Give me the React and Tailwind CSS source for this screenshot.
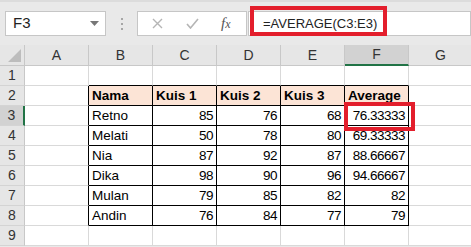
import React from 'react';

const cols = ['A', 'B', 'C', 'D', 'E', 'F', 'G'];

const data = {
  2: ['Nama', 'Kuis 1', 'Kuis 2', 'Kuis 3', 'Average'],
  3: ['Retno', '85', '76', '68', '76.33333'],
  4: ['Melati', '50', '78', '80', '69.33333'],
  5: ['Nia', '87', '92', '87', '88.66667'],
  6: ['Dika', '98', '90', '96', '94.66667'],
  7: ['Mulan', '79', '85', '82', '82'],
  8: ['Andin', '76', '84', '77', '79'],
};

const inTable = (r, c) => r >= 2 && r <= 8 && c >= 1 && c <= 5;

const Cell = ({ r, c }) => {
  const rightBlack = inTable(r, c) || (c === 0 && r >= 2 && r <= 8);
  const bottomBlack = inTable(r, c) || (r === 1 && c >= 1 && c <= 5);
  const row = data[r];
  const text = row && c >= 1 && c <= 5 ? row[c - 1] : '';
  const header = r === 2 && inTable(r, c);
  const numeric = !header && c >= 2;
  return (
    <div
      className={`h-[20px] border-r border-b px-[3px] text-[13.5px] leading-[19px] text-black whitespace-nowrap overflow-hidden ${
        rightBlack ? 'border-r-black' : 'border-r-[#d9d9d9]'
      } ${bottomBlack ? 'border-b-black' : 'border-b-[#d9d9d9]'} ${header ? 'bg-[#fce4d6] font-bold' : 'bg-white'} ${
        numeric ? 'text-right tracking-[-0.5px]' : 'text-left'
      }`}
    >
      {text}
    </div>
  );
};

const App = () => {
  const rows = [1, 2, 3, 4, 5, 6, 7, 8, 9];
  return (
    <div
      className="relative w-[471px] h-[247px] overflow-hidden bg-[#e9e9e9]"
      style={{ fontFamily: '"Liberation Sans", Arial, sans-serif' }}
    >
      {/* formula bar */}
      <div className="h-[45px] border-t-[2px] border-[#dcdcdc] flex items-start pt-[9px] pl-[5px]">
        <div className="w-[101px] h-[25px] bg-white border border-[#c6c6c6] flex items-center justify-between pl-[7px] pr-[6px] text-[15px] text-[#222]">
          <span>F3</span>
          <svg width="9" height="5" viewBox="0 0 9 5">
            <path d="M0 0 L9 0 L4.5 5 Z" fill="#777" />
          </svg>
        </div>
        <div className="w-[31px] h-[25px] flex flex-col items-center justify-center gap-[3px]">
          <span className="w-[2px] h-[2px] bg-[#a6a6a6]" />
          <span className="w-[2px] h-[2px] bg-[#a6a6a6]" />
          <span className="w-[2px] h-[2px] bg-[#a6a6a6]" />
        </div>
        <div className="w-[110px] h-[25px] bg-white border border-[#c6c6c6] flex items-center">
          <svg className="ml-[14px]" width="11" height="11" viewBox="0 0 11 11">
            <path d="M1 1 L10 10 M10 1 L1 10" stroke="#b5b5b5" strokeWidth="1.4" />
          </svg>
          <svg className="ml-[23px]" width="13" height="11" viewBox="0 0 13 11">
            <path d="M1 6 L4.5 10 L12 1" stroke="#b5b5b5" strokeWidth="1.6" fill="none" />
          </svg>
          <span
            className="ml-[22px] text-[15px] italic text-[#555]"
            style={{ fontFamily: '"Liberation Serif", "Times New Roman", serif' }}
          >
            f<span className="text-[12px]">x</span>
          </span>
        </div>
        <div className="flex-1 h-[25px] ml-[1px] bg-white border border-[#c6c6c6] flex items-center pl-[14px] text-[13px] text-[#222]">
          =AVERAGE(C3:E3)
        </div>
      </div>

      {/* sheet */}
      <div className="grid grid-cols-[25px_repeat(7,64px)]">
        <div className="h-[21px] bg-[#e6e6e6] border-r border-b border-[#c8c8c8] flex items-end justify-end pr-[3px] pb-[3px]">
          <svg width="13" height="13" viewBox="0 0 13 13">
            <path d="M13 0 L13 13 L0 13 Z" fill="#bdbdbd" />
          </svg>
        </div>
        {cols.map((c) => (
          <div
            key={c}
            className={`h-[21px] border-r border-[#c8c8c8] flex items-center justify-center text-[14px] text-[#333] ${
              c === 'F' ? 'bg-[#d2d2d2] border-b-2 border-b-[#217346]' : 'bg-[#e6e6e6] border-b border-b-[#c8c8c8]'
            }`}
          >
            {c}
          </div>
        ))}
        {rows.map((r) => (
          <React.Fragment key={r}>
            <div
              className={`h-[20px] border-b border-b-[#d4d4d4] flex items-center justify-center text-[14px] text-[#333] ${
                r === 3 ? 'bg-[#d2d2d2] border-r-2 border-r-[#217346]' : 'bg-[#e6e6e6] border-r border-r-[#c8c8c8]'
              }`}
            >
              {r}
            </div>
            {cols.map((c, i) => (
              <Cell key={c} r={r} c={i} />
            ))}
          </React.Fragment>
        ))}
      </div>

      {/* highlight boxes */}
      <div className="absolute left-[250px] top-[6px] w-[137px] h-[30px] border-[4px] border-[#e31e2c]" />
      <div className="absolute left-[344px] top-[102px] w-[71px] h-[29px] border-[4px] border-[#e31e2c]" />
    </div>
  );
};

export default App;
